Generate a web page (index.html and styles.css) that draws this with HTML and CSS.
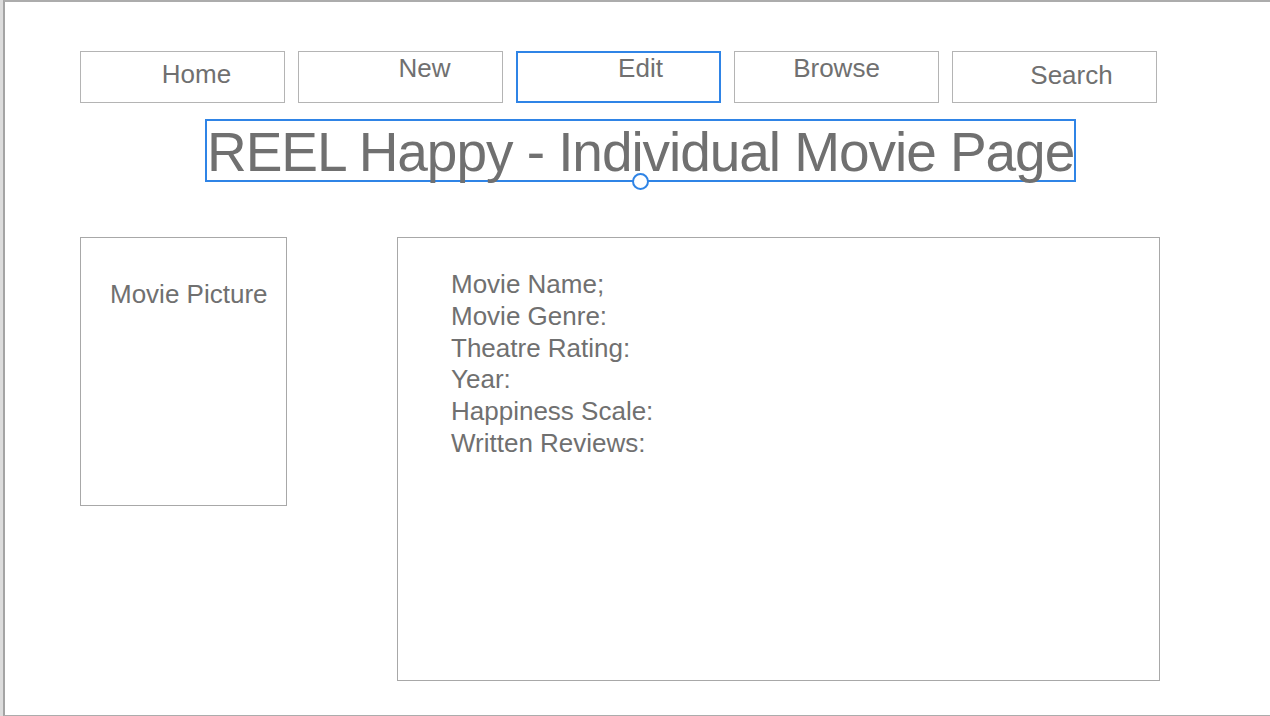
FILE: index.html
```html
<!DOCTYPE html>
<html lang="en">
<head>
    <meta charset="UTF-8">
    <meta name="viewport" content="width=device-width, initial-scale=1.0">
    <title>REEL Happy - Individual Movie Page</title>
    <link rel="stylesheet" href="styles.css">
</head>
<body>
    <div class="frame">
        <div class="page">
            <nav class="nav">
                <div class="nav-btn home">Home</div>
                <div class="nav-btn new">New</div>
                <div class="nav-btn edit">Edit</div>
                <div class="nav-btn browse">Browse</div>
                <div class="nav-btn search">Search</div>
            </nav>

            <div class="title">
                <h1>REEL Happy - Individual Movie Page</h1>
                <span class="handle"></span>
            </div>

            <div class="main">
                <div class="picture">Movie Picture</div>
                <div class="details">
                    <div>Movie Name;</div>
                    <div>Movie Genre:</div>
                    <div>Theatre Rating:</div>
                    <div>Year:</div>
                    <div>Happiness Scale:</div>
                    <div>Written Reviews:</div>
                </div>
            </div>
        </div>
    </div>
</body>
</html>
```

FILE: styles.css
```css
* {
    box-sizing: border-box;
}

body {
    font-family: "Liberation Sans", Arial, sans-serif;
    background-color: #fff;
    color: #707070;
    margin: 0;
    overflow: hidden;
}

.frame {
    border-left: 3px solid #dcdcdc;
    height: 716px;
}

.page {
    height: 716px;
    border-left: 2px solid #a4a4a4;
    border-top: 2px solid #acacac;
    border-bottom: 1px solid #acacac;
    padding-left: 75px;
}

.nav {
    display: flex;
    gap: 13px;
    margin-top: 49px;
}

.nav-btn {
    width: 205px;
    height: 52px;
    border: 1px solid #b4b4b4;
    font-size: 26px;
    display: flex;
    align-items: center;
    justify-content: center;
}

.nav-btn.home {
    padding-left: 28px;
    padding-bottom: 5px;
}

.nav-btn.new {
    padding-left: 48px;
    padding-bottom: 17px;
}

.nav-btn.edit {
    border: 2px solid #2f84e6;
    padding-left: 44px;
    padding-bottom: 17px;
}

.nav-btn.browse {
    padding-bottom: 17px;
}

.nav-btn.search {
    padding-left: 34px;
    padding-bottom: 4px;
}

.title {
    position: relative;
    width: 871px;
    height: 63px;
    margin: 16px 0 0 125px;
    border: 2px solid #2f84e6;
}

.title h1 {
    margin: 0;
    font-size: 55px;
    font-weight: normal;
    letter-spacing: -1.05px;
    line-height: 57px;
    padding-top: 3px;
    white-space: nowrap;
}

.handle {
    position: absolute;
    left: 425px;
    bottom: -10px;
    width: 17px;
    height: 17px;
    border: 2px solid #2f84e6;
    border-radius: 50%;
    background: #fff;
}

.main {
    display: flex;
    align-items: flex-start;
    gap: 110px;
    margin-top: 55px;
}

.picture {
    width: 207px;
    height: 269px;
    border: 1px solid #a8a8a8;
    font-size: 26px;
    padding: 41px 0 0 29px;
}

.details {
    width: 763px;
    height: 444px;
    border: 1px solid #a8a8a8;
    font-size: 26px;
    line-height: 31.8px;
    padding: 31px 0 0 53px;
}
```
